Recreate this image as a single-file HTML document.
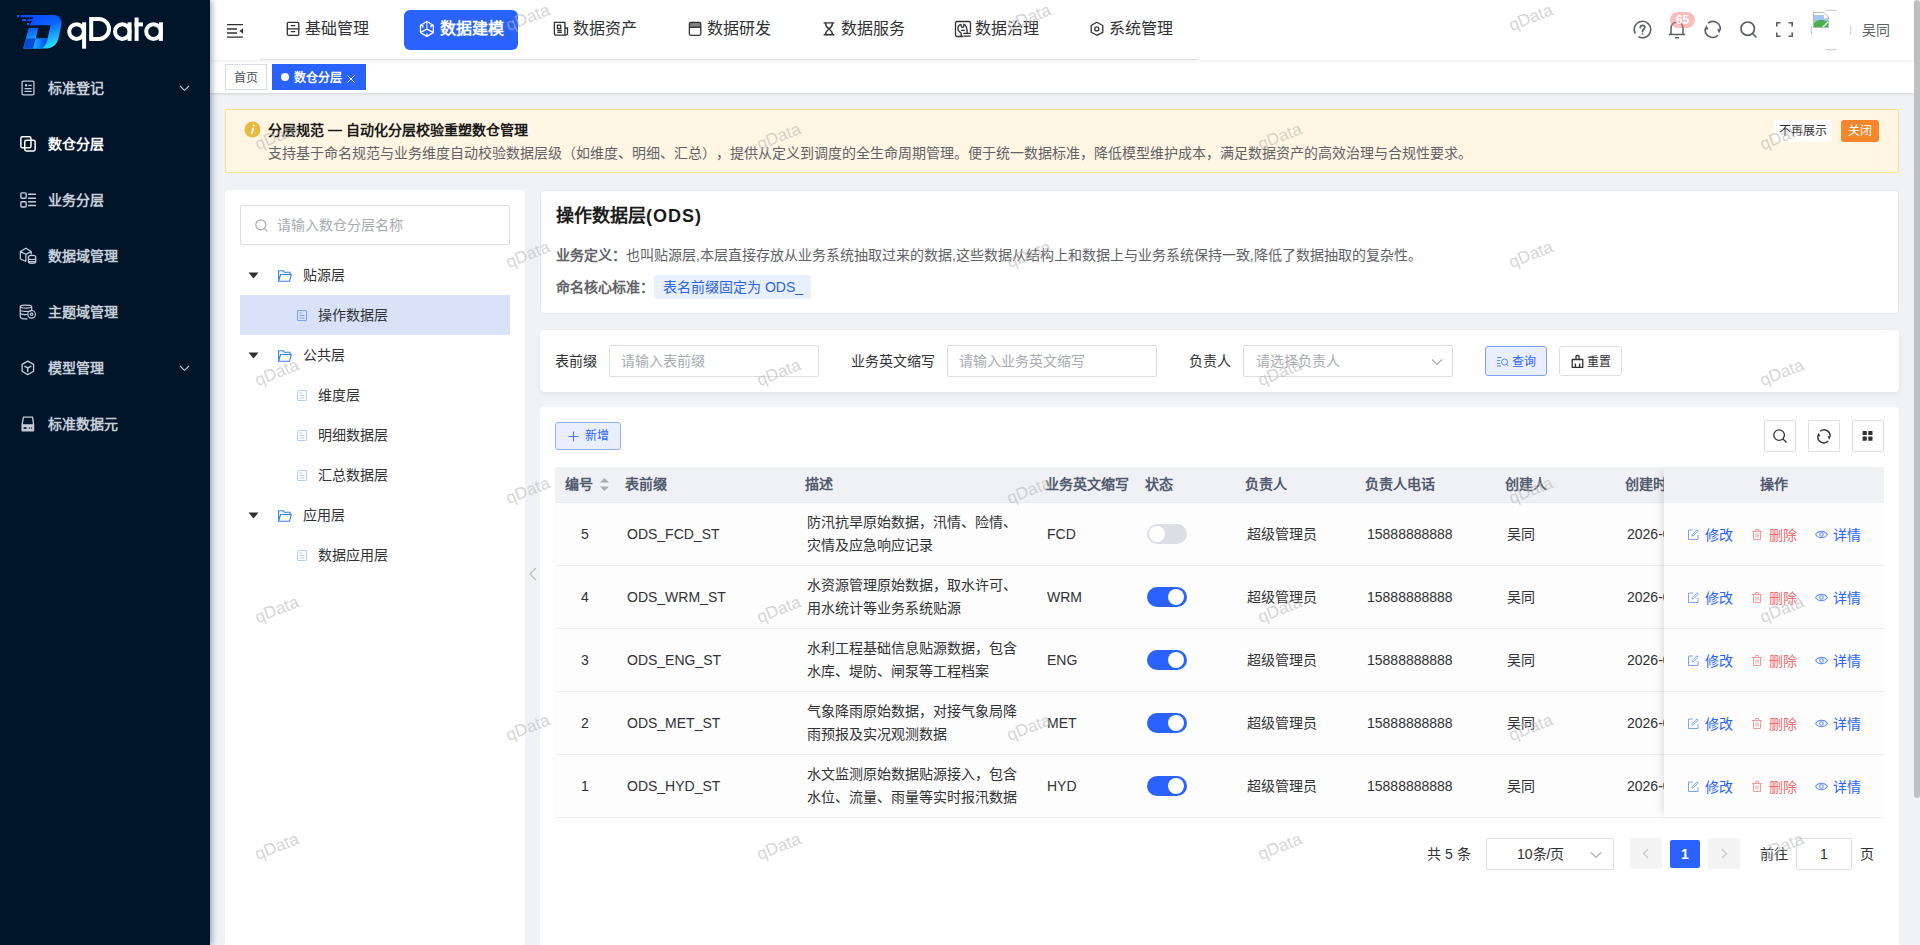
<!DOCTYPE html>
<html lang="zh-CN"><head><meta charset="utf-8">
<style>
*{box-sizing:border-box;margin:0;padding:0}
html,body{text-spacing-trim:space-all;width:1920px;height:945px;overflow:hidden;font-family:"Liberation Sans",sans-serif;color:#303133;background:#f0f2f5}
.abs{position:absolute}
#side{position:absolute;left:0;top:0;width:210px;height:945px;background:#001529;z-index:5;box-shadow:2px 0 6px rgba(0,21,41,.35)}
#nav{position:absolute;left:210px;top:0;width:1704px;height:60px;background:#fff;z-index:2;box-shadow:0 1px 4px rgba(0,21,41,.08)}
#tags{position:absolute;left:210px;top:60px;width:1704px;height:33px;background:#fff;box-shadow:0 1px 3px rgba(0,21,41,.12),0 0 3px rgba(0,0,0,.04)}
#sb{position:absolute;left:1914px;top:0;width:6px;height:945px;background:#f0f2f5}
.card{position:absolute;background:#fff;border-radius:4px}
.menu{position:absolute;left:0;width:210px;height:56px;color:#c6ceda;font-size:14px;font-weight:bold}
.menu .t{position:absolute;left:48px;top:1px;line-height:56px}
.menu svg{position:absolute;left:20px;top:20px}
.navi{position:absolute;top:10px;height:40px;font-size:16px;color:#303133;line-height:38px}
.wm{position:absolute;z-index:10;width:100px;height:30px;line-height:30px;text-align:center;font-size:17px;color:rgba(185,185,185,.6);transform:rotate(-22deg);pointer-events:none;white-space:nowrap}
</style></head><body>
<div id="side">
<svg class="abs" style="left:0;top:0" width="210" height="60" viewBox="0 0 210 60">
<defs>
<linearGradient id="lg1" x1="0" y1="0" x2="0.35" y2="1"><stop offset="0" stop-color="#0a45ff"/><stop offset="0.45" stop-color="#0a62ff"/><stop offset="1" stop-color="#22d2ff"/></linearGradient>
<linearGradient id="lg2" x1="0" y1="0" x2="1" y2="0"><stop offset="0" stop-color="#16b4ff"/><stop offset="1" stop-color="#0a3dff"/></linearGradient>
</defs>
<path d="M34,15 L53.5,15 C59.5,15 62.3,19.5 61.2,25.5 L58.6,38 C57,45 52,48.6 45,48.6 L23.2,48.6 L28.8,28.1 L38.2,28.1 L35.9,38.5 L47.6,38.5 L50.6,25.3 L30.3,25.3 Z" fill="url(#lg1)"/>
<path d="M23.2,48.6 L26,38.5 L35.9,38.5 L33.2,48.6 Z" fill="#0a4bd6"/>
<path d="M33.2,48.6 L35.9,38.5 L47.6,38.5 C46.5,44 44,48.6 40,48.6 Z" fill="url(#lg2)"/>
<rect x="20.7" y="15" width="14" height="2.3" fill="#0a4dff"/>
<rect x="17.1" y="15" width="2" height="2.3" fill="#1a55ff"/>
<rect x="21.9" y="19.2" width="4.1" height="2" fill="#1a55ff"/>
<rect x="27.3" y="19.2" width="7.6" height="2" fill="#0a4dff"/>
<rect x="27" y="23" width="2.3" height="2" fill="#1a55ff"/>
<rect x="30.3" y="23" width="5" height="2.3" fill="#0a4dff"/>
<g fill="none" stroke="#fff" stroke-width="4">
<circle cx="76.5" cy="31.6" r="7.3"/><line x1="84.1" y1="22.3" x2="84.1" y2="48.7"/>
<path d="M91.2,18.9 H99 A10,10 0 0 1 99,38.9 H91.2 Z"/>
<circle cx="122.3" cy="31.6" r="7.3"/><line x1="129.6" y1="22.3" x2="129.6" y2="40.9"/>
<line x1="136.6" y1="17.5" x2="136.6" y2="40.9"/><line x1="134.5" y1="24.4" x2="143" y2="24.4"/>
<circle cx="153.5" cy="31.6" r="7.3"/><line x1="160.9" y1="22.3" x2="160.9" y2="40.9"/>
</g>
</svg>
<div class="menu" style="top:59px"><svg width="14" height="16" viewBox="0 0 14 16" style="left:21px;top:21px"><g fill="none" stroke="#c6ceda" stroke-width="1.3"><rect x="1.1" y="1.1" width="11.8" height="13.7" rx="1"/><path d="M7.8,5.3 H10.2 M4,8.6 H10.2 M4,11.4 H10.2" stroke-linecap="round"/></g><rect x="4" y="4.1" width="2.2" height="2.3" fill="#c6ceda"/></svg><span class="t">标准登记</span>
<svg width="11" height="7" viewBox="0 0 11 7" style="left:179px;top:26px"><path d="M1,1 L5.5,5.3 L10,1" fill="none" stroke="#c6ceda" stroke-width="1.1"/></svg></div>
<div class="menu" style="top:115px;color:#fff"><svg width="18" height="18" viewBox="0 0 18 18" style="left:19px;top:20px"><g fill="none" stroke="#fff" stroke-width="1.5"><rect x="1.85" y="1.85" width="10.1" height="10.9" rx="1.6"/><rect x="5.75" y="5.15" width="10.4" height="10.8" rx="1.6"/></g></svg><span class="t">数仓分层</span></div>
<div class="menu" style="top:171px"><svg width="18" height="18" viewBox="0 0 18 18" style="left:19px;top:20px"><g fill="none" stroke="#c6ceda" stroke-width="1.4" stroke-linecap="round"><rect x="1.85" y="1.85" width="5.3" height="5.4" rx="1"/><rect x="1.85" y="10.7" width="5.3" height="5.3" rx="1"/><path d="M9.5,3.3 H16.5 M9.5,7.3 H16.5 M9.5,10.7 H16.5 M9.5,14.5 H16.5"/></g></svg><span class="t">业务分层</span></div>
<div class="menu" style="top:227px"><svg width="18" height="18" viewBox="0 0 18 18" style="left:19px;top:20px"><g fill="none" stroke="#c6ceda" stroke-width="1.2" stroke-linejoin="round"><path d="M1.3,4.6 L6.9,1.2 L12.2,4.6 L6.9,7.2 Z M1.3,4.6 V12 L6.9,14.5 M6.9,7.2 V14.5 M12.2,4.6 V7.6"/><path d="M9.4,10 C9.4,7.7 16.8,7.7 16.8,10 V14.8 C16.8,17 9.4,17 9.4,14.8 Z M9.4,11.6 C9.4,12.8 16.8,12.8 16.8,11.6 M9.4,13.9 C9.4,15 16.8,15 16.8,13.9"/></g></svg><span class="t">数据域管理</span></div>
<div class="menu" style="top:283px"><svg width="18" height="18" viewBox="0 0 18 18" style="left:19px;top:21px"><g fill="none" stroke="#c6ceda" stroke-width="1.2"><path d="M1.2,2.6 C1.2,0.5 12.7,0.5 12.7,2.6 C12.7,4.6 1.2,4.6 1.2,2.6 Z M1.2,2.6 V12.8 C1.2,14.6 5,15 8.5,14.8 M1.2,6 C1.2,7.6 10,7.8 12.5,6.8 M1.2,9 C1.2,10.6 6,10.8 8.6,10.5 M12.7,2.6 V6.2"/><circle cx="12.6" cy="10.3" r="3.8"/><circle cx="12.6" cy="10.3" r="1.2"/></g></svg><span class="t">主题域管理</span></div>
<div class="menu" style="top:339px"><svg width="14" height="16" viewBox="0 0 14 16" style="left:21px;top:21px"><g fill="none" stroke="#c6ceda" stroke-width="1.3" stroke-linejoin="round"><path d="M6.7,1.1 L12.6,4.4 V11.3 L6.7,14.6 L1.1,11.3 V4.4 Z"/><path d="M3.9,6.3 L6.7,7.9 L9.9,6.3 M6.7,7.9 V11.5" stroke-width="1.5" stroke-linecap="round"/></g></svg><span class="t">模型管理</span>
<svg width="11" height="7" viewBox="0 0 11 7" style="left:179px;top:26px"><path d="M1,1 L5.5,5.3 L10,1" fill="none" stroke="#c6ceda" stroke-width="1.1"/></svg></div>
<div class="menu" style="top:395px"><svg width="14" height="16" viewBox="0 0 14 16" style="left:21px;top:21px"><path d="M1.1,9 H12.9 V14.8 H1.1 Z" fill="#c6ceda"/><g fill="none" stroke="#c6ceda" stroke-width="1.3" stroke-linejoin="round"><path d="M2.4,1.1 H11.6 L12.6,8.8 V14.8 H1.1 V8.8 Z M1.1,8.8 H12.6"/></g><rect x="2.6" y="11.2" width="3" height="1.7" fill="#001529"/><rect x="7.9" y="11.2" width="0.9" height="1.7" fill="#001529"/><rect x="9.9" y="11.2" width="1.3" height="1.7" fill="#3a4656"/></svg><span class="t">标准数据元</span></div>
</div>
<div id="nav">
<div class="abs" style="left:50px;top:59px;width:938px;height:1px;background:#dcdfe6"></div>
<svg class="abs" style="left:17px;top:24px" width="16" height="14" viewBox="0 0 16 14"><g stroke="#303133" stroke-width="1.3"><path d="M0,0.7 H16 M0,5 H10 M0,9 H10 M0,13.2 H16"/></g><path d="M16,4.2 L12.5,7 L16,9.8 Z" fill="#303133"/></svg>
<!-- items -->
<div class="navi" style="left:61px;width:114px">
<svg class="abs" style="left:15px;top:11px" width="15" height="16" viewBox="0 0 15 16"><g fill="none" stroke="#303133" stroke-width="1.3" stroke-linecap="round"><rect x="1.3" y="1.4" width="11.5" height="12.9" rx="1.2"/><path d="M1.3,7.8 H12.8 M5.3,4.6 H8.8 M5.3,10.6 H8.8"/></g></svg>
<span class="abs" style="left:34px;top:0">基础管理</span></div>
<div class="navi" style="left:194px;width:114px;background:#2962ff;border-radius:6px;color:#fff;font-weight:bold">
<svg class="abs" style="left:15px;top:9px" width="17" height="19" viewBox="0 0 17 19"><g fill="none" stroke="#fff" stroke-width="1.3" stroke-linejoin="round"><path d="M7.9,2.5 L14.3,6.3 V13.6 L7.9,17.4 L1.5,13.6 V6.3 Z"/><path d="M1.5,13.4 L7.9,10.2 L14.3,13.4 M7.9,17.4 V14.4 M1.8,6.6 H3.8 V8.4 M14,6.6 H12 V8.4"/><path d="M7.9,2.5 V10.2" stroke-opacity="0.75"/></g></svg>
<span class="abs" style="left:36px;top:0">数据建模</span></div>
<div class="navi" style="left:328px;width:114px">
<svg class="abs" style="left:15px;top:11px" width="16" height="16" viewBox="0 0 16 16"><g fill="none" stroke="#303133" stroke-width="1.3"><path d="M11.9,14.2 H2.9 A1.5,1.5 0 0 1 1.4,12.7 V1.4 H11.9 Z M11.9,7 H14.5 V12.5 A1.7,1.7 0 0 1 12.8,14.2 H11.9"/><rect x="4.4" y="4.2" width="3.3" height="3.3"/><path d="M4.3,9.5 H8.8 M4.3,11.3 H8.8"/></g></svg>
<span class="abs" style="left:35px;top:0">数据资产</span></div>
<div class="navi" style="left:462px;width:114px">
<svg class="abs" style="left:16px;top:11px" width="14" height="16" viewBox="0 0 14 16"><rect x="1.4" y="1.4" width="11.4" height="4.9" fill="#808080"/><g fill="none" stroke="#303133" stroke-width="1.3"><rect x="1.4" y="1.4" width="11.4" height="12.9" rx="1.5"/><path d="M1.4,6.3 H12.8"/></g></svg>
<span class="abs" style="left:35px;top:0">数据研发</span></div>
<div class="navi" style="left:596px;width:114px">
<svg class="abs" style="left:16px;top:11px" width="15" height="16" viewBox="0 0 15 16"><g fill="none" stroke="#303133" stroke-width="1.4"><path d="M1.6,1.9 H12.3 M1.6,13.8 H12.3 M3.5,1.9 C3.5,5.5 5,6.5 7,7.9 C9,9.3 10.5,10.3 10.5,13.8 M10.5,1.9 C10.5,5.5 9,6.5 7,7.9 C5,9.3 3.5,10.3 3.5,13.8"/></g></svg>
<span class="abs" style="left:35px;top:0">数据服务</span></div>
<div class="navi" style="left:730px;width:114px">
<svg class="abs" style="left:14px;top:10px" width="18" height="18" viewBox="0 0 18 18"><g fill="none" stroke="#303133" stroke-width="1.3"><path d="M9,16.5 H3 A1.5,1.5 0 0 1 1.5,15 V3 A1.5,1.5 0 0 1 3,1.5 H15 A1.5,1.5 0 0 1 16.5,3 V12.3 M9.3,13.4 H16.7 M9.3,16.2 H16.7 M7.2,10.4 H10.7"/><path d="M7,4.3 C4.5,5 3.7,7.5 4,9.5 C4.3,11.5 6.8,12.5 7.2,13.5 V16.5 M7.2,4.3 V6.5 C7.2,7.6 9.8,7.6 9.8,6.5 V4.3 C12.3,5 13.2,8 13.2,13.2"/></g></svg>
<span class="abs" style="left:35px;top:0">数据治理</span></div>
<div class="navi" style="left:864px;width:114px">
<svg class="abs" style="left:16px;top:11px" width="14" height="16" viewBox="0 0 14 16"><g fill="none" stroke="#303133" stroke-width="1.3" stroke-linejoin="round"><path d="M6.8,1.3 L12.8,4.5 V11.3 L6.8,14.3 L1.2,11.3 V4.5 Z"/><circle cx="6.8" cy="7.9" r="2"/></g></svg>
<span class="abs" style="left:35px;top:0">系统管理</span></div>
<!-- right tools -->
<svg class="abs" style="left:1423px;top:20px" width="19" height="19" viewBox="0 0 19 19"><g fill="none" stroke="#5a5e66" stroke-width="1.6"><path d="M5.4,16.6 A8.2,8.2 0 1 0 2.4,13.6"/><path d="M7.3,7.5 C7.3,4.6 11.8,4.6 11.8,7.3 C11.8,9 9.8,9.4 9.5,11.5" stroke-width="1.8" stroke-linecap="round"/></g><rect x="8.7" y="13.3" width="1.7" height="1.3" fill="#5a5e66"/></svg>
<svg class="abs" style="left:1458px;top:20px" width="18" height="19" viewBox="0 0 18 19"><g fill="none" stroke="#5a5e66" stroke-width="1.5"><path d="M3,14.2 V8.5 C3,4.8 5.5,2.2 9,2.2 C12.5,2.2 15,4.8 15,8.5 V14.2 M0.8,14.6 H17.2 M7,17.8 H11"/></g></svg>
<div class="abs" style="left:1460px;top:12px;width:25px;height:16px;border-radius:8px;background:rgba(245,108,108,.45);color:#fff;font-size:12px;font-weight:bold;line-height:16px;text-align:center">65</div>
<svg class="abs" style="left:1493px;top:19px" width="20" height="20" viewBox="0 0 20 20"><g fill="none" stroke="#5a5e66" stroke-width="1.6"><path d="M5.1,4.2 A7.4,7.4 0 0 1 17.2,10.8 M14.9,16.2 A7.4,7.4 0 0 1 2.4,9.6"/></g><path d="M14.1,10.2 L18,10.2 L16.1,14.6 Z M1.5,10.4 L5.5,10.4 L3.3,6 Z" fill="#5a5e66"/></svg>
<svg class="abs" style="left:1530px;top:21px" width="18" height="18" viewBox="0 0 18 18"><g fill="none" stroke="#5a5e66" stroke-width="1.7"><circle cx="7.7" cy="7.7" r="6.7"/><path d="M12.5,12.5 L16.5,16.5"/></g></svg>
<svg class="abs" style="left:1566px;top:22px" width="17" height="15" viewBox="0 0 17 15"><g fill="none" stroke="#5a5e66" stroke-width="1.6"><path d="M0.8,4.5 V0.8 H4.5 M12.5,0.8 H16.2 V4.5 M16.2,10.5 V14.2 H12.5 M4.5,14.2 H0.8 V10.5"/></g></svg>
<svg class="abs" style="left:1600px;top:9px" width="42" height="42" viewBox="0 0 42 42"><g fill="none" stroke="#c8c8c8" stroke-width="1"><path d="M15.5,1.8 A19.7,19.7 0 0 1 26.5,1.8 M15.5,40.2 A19.7,19.7 0 0 0 26.5,40.2 M1.5,17 A19.7,19.7 0 0 0 1.5,25 M40.5,17 A19.7,19.7 0 0 1 40.5,25"/></g></svg>
<svg class="abs" style="left:1603px;top:12px" width="16" height="16" viewBox="0 0 16 16"><path d="M0.5,0.5 H11 L15.5,5 V15.5 H0.5 Z" fill="#fff" stroke="#9aa" stroke-width="0.8"/><path d="M1,3 H11 V7 L15,5.5 V10 H1 Z" fill="#a8c8f0"/><path d="M1,15 V11 C5,7 10,7 15,10 V15 Z" fill="#4caf50"/><path d="M10,15 L15,10" stroke="#fff" stroke-width="1.2"/></svg>
<span class="abs" style="left:1652px;top:20px;font-size:14px;color:#606266;line-height:20px">吴同</span>
</div>
<div id="tags">
<div class="abs" style="left:15px;top:4px;width:42px;height:26px;border:1px solid #d8dce5;background:#fff;font-size:12px;line-height:26px;text-align:center;color:#495060">首页</div>
<div class="abs" style="left:62px;top:4px;width:94px;height:26px;background:#2962ff;font-size:12px;line-height:26px;color:#fff">
<span class="abs" style="left:9px;top:9px;width:8px;height:8px;border-radius:50%;background:#fff"></span>
<span class="abs" style="left:22px;top:1px;font-weight:bold">数仓分层</span>
<svg class="abs" style="left:74px;top:10px" width="10" height="10" viewBox="0 0 10 10"><path d="M1.5,1.5 L8.5,8.5 M8.5,1.5 L1.5,8.5" stroke="#fff" stroke-width="1"/></svg>
</div>
</div>
<!-- alert -->
<div class="abs" style="left:225px;top:109px;width:1674px;height:64px;background:#fef6e3;border:1px solid #fde08c;border-radius:2px">
<svg class="abs" style="left:18.4px;top:11.4px" width="17" height="17" viewBox="0 0 17 17"><circle cx="8.5" cy="8.5" r="8" fill="#ebb940"/><circle cx="9.6" cy="4.5" r="1" fill="#fff"/><path d="M9.3,7.3 L8,12.4" stroke="#fff" stroke-width="1.7" stroke-linecap="round"/></svg>
<div class="abs" style="left:42px;top:10px;font-size:14px;line-height:20px;font-weight:bold;color:#1a1a1a">分层规范 — 自动化分层校验重塑数仓管理</div>
<div class="abs" style="left:42px;top:33px;font-size:14px;line-height:20px;color:#606266;white-space:nowrap">支持基于命名规范与业务维度自动校验数据层级（如维度、明细、汇总），提供从定义到调度的全生命周期管理。便于统一数据标准，降低模型维护成本，满足数据资产的高效治理与合规性要求。</div>
<div class="abs" style="left:1548px;top:10px;width:58px;height:22px;background:#fff;border-radius:3px;font-size:12px;line-height:22px;text-align:center;color:#303133">不再展示</div>
<div class="abs" style="left:1615px;top:10px;width:38px;height:22px;background:#f5862b;border-radius:3px;font-size:12px;line-height:22px;text-align:center;color:#fff">关闭</div>
</div>
<!-- left tree panel -->
<div class="card" style="left:225px;top:190px;width:300px;height:780px">
<div class="abs" style="left:15px;top:15px;width:270px;height:40px;border:1px solid #dcdfe6;border-radius:2px">
<svg class="abs" style="left:14px;top:13px" width="13" height="13" viewBox="0 0 13 13"><g fill="none" stroke="#a8abb2" stroke-width="1.2"><circle cx="5.8" cy="5.8" r="5"/><path d="M9.5,9.5 L12.3,12.3"/></g></svg>
<span class="abs" style="left:36px;top:9px;font-size:14px;line-height:20px;color:#a8abb2">请输入数仓分层名称</span>
</div>
<div class="abs" style="left:15px;top:105px;width:270px;height:40px;background:#d9e2f8"></div>
</div>
<div class="abs" id="tree" style="left:225px;top:190px">
</div>
<svg class="abs" style="left:528px;top:567px" width="9" height="14" viewBox="0 0 9 14"><path d="M8,1 L2,7 L8,13" fill="none" stroke="#b5b9c1" stroke-width="1.1"/></svg>
<!-- info card -->
<div class="card" style="left:540px;top:190px;width:1359px;height:124px;border:1px solid #e4e7ed">
<div class="abs" style="left:15px;top:12px;font-size:18px;line-height:26px;font-weight:bold;color:#1a1a1a">操作数据层<span style="letter-spacing:1px">(ODS)</span></div>
<div class="abs" style="left:15px;top:53px;font-size:14px;line-height:22px;color:#606266;white-space:nowrap"><span style="font-weight:bold;color:#606266">业务定义：</span>也叫贴源层,本层直接存放从业务系统抽取过来的数据,这些数据从结构上和数据上与业务系统保持一致,降低了数据抽取的复杂性。</div>
<div class="abs" style="left:15px;top:85px;font-size:14px;line-height:22px;color:#606266;font-weight:bold">命名核心标准：</div>
<div class="abs" style="left:113px;top:84px;width:157px;height:24px;background:#e8f0ff;border-radius:3px;font-size:14px;line-height:24px;color:#2b63e8;padding-left:9px;white-space:nowrap">表名前缀固定为 ODS_</div>
</div>
<!-- search card -->
<div class="card" style="left:540px;top:330px;width:1359px;height:62px;box-shadow:0 2px 5px rgba(0,0,0,.06)">
<span class="abs" style="left:15px;top:20px;font-size:14px;line-height:22px;color:#303133;font-weight:500">表前缀</span>
<div class="abs" style="left:69px;top:15px;width:210px;height:32px;border:1px solid #dcdfe6;border-radius:2px"><span class="abs" style="left:11px;top:5px;font-size:14px;line-height:20px;color:#a8abb2">请输入表前缀</span></div>
<span class="abs" style="left:311px;top:20px;font-size:14px;line-height:22px;color:#303133;font-weight:500">业务英文缩写</span>
<div class="abs" style="left:407px;top:15px;width:210px;height:32px;border:1px solid #dcdfe6;border-radius:2px"><span class="abs" style="left:11px;top:5px;font-size:14px;line-height:20px;color:#a8abb2">请输入业务英文缩写</span></div>
<span class="abs" style="left:649px;top:20px;font-size:14px;line-height:22px;color:#303133;font-weight:500">负责人</span>
<div class="abs" style="left:703px;top:15px;width:210px;height:32px;border:1px solid #dcdfe6;border-radius:2px"><span class="abs" style="left:12px;top:5px;font-size:14px;line-height:20px;color:#a8abb2">请选择负责人</span>
<svg class="abs" style="left:187px;top:12px" width="12" height="8" viewBox="0 0 12 8"><path d="M1,1.5 L6,6.5 L11,1.5" fill="none" stroke="#a8abb2" stroke-width="1.1"/></svg></div>
<div class="abs" style="left:945px;top:16px;width:62px;height:30px;border:1px solid #7ea2fb;background:#e9effe;border-radius:3px">
<svg class="abs" style="left:11px;top:9px" width="12" height="11" viewBox="0 0 12 11"><g fill="none" stroke="#5b86f7" stroke-width="1"><path d="M0,1.5 H4.5 M0,4.5 H3 M0,7.5 H3 M0,10 H4"/><circle cx="7.5" cy="6" r="3"/><path d="M9.6,8.2 L11.5,10.2"/></g></svg>
<span class="abs" style="left:26px;top:7px;font-size:12px;line-height:16px;color:#2962ff;font-weight:500">查询</span></div>
<div class="abs" style="left:1019px;top:16px;width:63px;height:30px;border:1px solid #dcdfe6;background:#fff;border-radius:3px">
<svg class="abs" style="left:11px;top:7.5px" width="13" height="13" viewBox="0 0 13 13"><g fill="none" stroke="#303133" stroke-width="1.3" stroke-linejoin="round"><path d="M5,0.7 H8 V4.2 M5,0.7 V4.2 M1.2,12.3 V4.5 H11.8 V12.3 Z M4.4,8.5 V12 M8.6,8.5 V12"/></g></svg>
<span class="abs" style="left:27px;top:7px;font-size:12px;line-height:16px;color:#303133;font-weight:500">重置</span></div>
</div>
<!-- table card -->
<div class="card" style="left:540px;top:407px;width:1359px;height:560px" id="tcard">
</div>
<svg class="abs" style="left:248px;top:272px" width="11" height="7" viewBox="0 0 11 7"><path d="M0.5,0.5 H10.5 L5.5,6.5 Z" fill="#303133"/></svg>
<svg class="abs" style="left:278px;top:270px" width="14" height="12" viewBox="0 0 14 12"><path d="M0.6,11.3 V0.7 H5 L6.3,2.2 H12 V4.5 M0.6,11.3 L2.6,4.5 H13.4 L11.4,11.3 Z" fill="none" stroke="#3d7cf5" stroke-width="1.1" stroke-linejoin="round"/></svg>
<span class="abs" style="left:303px;top:265px;font-size:14px;line-height:20px;color:#303133;font-weight:500">贴源层</span>
<svg class="abs" style="left:297px;top:310px" width="10" height="11" viewBox="0 0 10 11"><g fill="none" stroke="#7ea2f0" stroke-width="1"><rect x="0.5" y="0.5" width="9" height="10" rx="0.5"/><path d="M2.5,3 H5 M2.5,5.5 H7.5 M2.5,8 H7.5"/></g></svg>
<span class="abs" style="left:318px;top:305px;font-size:14px;line-height:20px;color:#303133;font-weight:500">操作数据层</span>
<svg class="abs" style="left:248px;top:352px" width="11" height="7" viewBox="0 0 11 7"><path d="M0.5,0.5 H10.5 L5.5,6.5 Z" fill="#303133"/></svg>
<svg class="abs" style="left:278px;top:350px" width="14" height="12" viewBox="0 0 14 12"><path d="M0.6,11.3 V0.7 H5 L6.3,2.2 H12 V4.5 M0.6,11.3 L2.6,4.5 H13.4 L11.4,11.3 Z" fill="none" stroke="#3d7cf5" stroke-width="1.1" stroke-linejoin="round"/></svg>
<span class="abs" style="left:303px;top:345px;font-size:14px;line-height:20px;color:#303133;font-weight:500">公共层</span>
<svg class="abs" style="left:297px;top:390px" width="10" height="11" viewBox="0 0 10 11"><g fill="none" stroke="#b9cdf5" stroke-width="1"><rect x="0.5" y="0.5" width="9" height="10" rx="0.5"/><path d="M2.5,3 H5 M2.5,5.5 H7.5 M2.5,8 H7.5"/></g></svg>
<span class="abs" style="left:318px;top:385px;font-size:14px;line-height:20px;color:#303133;font-weight:500">维度层</span>
<svg class="abs" style="left:297px;top:430px" width="10" height="11" viewBox="0 0 10 11"><g fill="none" stroke="#b9cdf5" stroke-width="1"><rect x="0.5" y="0.5" width="9" height="10" rx="0.5"/><path d="M2.5,3 H5 M2.5,5.5 H7.5 M2.5,8 H7.5"/></g></svg>
<span class="abs" style="left:318px;top:425px;font-size:14px;line-height:20px;color:#303133;font-weight:500">明细数据层</span>
<svg class="abs" style="left:297px;top:470px" width="10" height="11" viewBox="0 0 10 11"><g fill="none" stroke="#b9cdf5" stroke-width="1"><rect x="0.5" y="0.5" width="9" height="10" rx="0.5"/><path d="M2.5,3 H5 M2.5,5.5 H7.5 M2.5,8 H7.5"/></g></svg>
<span class="abs" style="left:318px;top:465px;font-size:14px;line-height:20px;color:#303133;font-weight:500">汇总数据层</span>
<svg class="abs" style="left:248px;top:512px" width="11" height="7" viewBox="0 0 11 7"><path d="M0.5,0.5 H10.5 L5.5,6.5 Z" fill="#303133"/></svg>
<svg class="abs" style="left:278px;top:510px" width="14" height="12" viewBox="0 0 14 12"><path d="M0.6,11.3 V0.7 H5 L6.3,2.2 H12 V4.5 M0.6,11.3 L2.6,4.5 H13.4 L11.4,11.3 Z" fill="none" stroke="#3d7cf5" stroke-width="1.1" stroke-linejoin="round"/></svg>
<span class="abs" style="left:303px;top:505px;font-size:14px;line-height:20px;color:#303133;font-weight:500">应用层</span>
<svg class="abs" style="left:297px;top:550px" width="10" height="11" viewBox="0 0 10 11"><g fill="none" stroke="#b9cdf5" stroke-width="1"><rect x="0.5" y="0.5" width="9" height="10" rx="0.5"/><path d="M2.5,3 H5 M2.5,5.5 H7.5 M2.5,8 H7.5"/></g></svg>
<span class="abs" style="left:318px;top:545px;font-size:14px;line-height:20px;color:#303133;font-weight:500">数据应用层</span><div class="abs" style="left:555px;top:422px;width:66px;height:28px;border:1px solid #8fb0f8;background:#e9effe;border-radius:3px"><svg class="abs" style="left:12px;top:8px" width="11" height="11" viewBox="0 0 11 11"><path d="M5.5,0.5 V10.5 M0.5,5.5 H10.5" stroke="#4a78f5" stroke-width="1.1"/></svg><span class="abs" style="left:29px;top:5px;font-size:12px;line-height:16px;color:#2962ff">新增</span></div>
<div class="abs" style="left:1764px;top:420px;width:32px;height:32px;border:1px solid #dcdfe6;border-radius:2px;background:#fff"></div>
<div class="abs" style="left:1808px;top:420px;width:32px;height:32px;border:1px solid #dcdfe6;border-radius:2px;background:#fff"></div>
<div class="abs" style="left:1852px;top:420px;width:32px;height:32px;border:1px solid #dcdfe6;border-radius:2px;background:#fff"></div>
<svg class="abs" style="left:1772px;top:428px" width="16" height="16" viewBox="0 0 16 16"><g fill="none" stroke="#303133" stroke-width="1.3"><circle cx="7.1" cy="7.1" r="5.3"/><path d="M10.9,10.9 L14.5,14.5"/></g></svg>
<svg class="abs" style="left:1816px;top:428px" width="16" height="16" viewBox="0 0 16 16"><g transform="translate(8,8) scale(0.82) translate(-9.8,-10)"><g fill="none" stroke="#303133" stroke-width="1.6"><path d="M5.1,4.2 A7.4,7.4 0 0 1 17.2,10.8 M14.9,16.2 A7.4,7.4 0 0 1 2.4,9.6"/></g><path d="M14.1,10.2 L18,10.2 L16.1,14.6 Z M1.5,10.4 L5.5,10.4 L3.3,6 Z" fill="#303133"/></g></svg>
<svg class="abs" style="left:1862px;top:430px" width="12" height="12" viewBox="0 0 12 12"><g fill="#303133"><rect x="0.6" y="0.9" width="4.2" height="4.2" rx="0.6"/><rect x="6.3" y="0.9" width="4.2" height="4.2" rx="0.6"/><rect x="0.6" y="6.6" width="4.2" height="4.2" rx="0.6"/><rect x="6.3" y="6.6" width="4.2" height="4.2" rx="0.6"/></g></svg>
<div class="abs" style="left:555px;top:467px;width:1329px;height:36px;background:#f0f1f5;border-bottom:1px solid #e6e9f2"></div>
<div class="abs" style="left:555px;top:467px;width:1109px;height:36px;overflow:hidden">
<span class="abs" style="left:10px;top:6px;font-size:14px;line-height:22px;color:#515a6e;font-weight:bold;white-space:nowrap">编号</span>
<span class="abs" style="left:70px;top:6px;font-size:14px;line-height:22px;color:#515a6e;font-weight:bold;white-space:nowrap">表前缀</span>
<span class="abs" style="left:250px;top:6px;font-size:14px;line-height:22px;color:#515a6e;font-weight:bold;white-space:nowrap">描述</span>
<span class="abs" style="left:490px;top:6px;font-size:14px;line-height:22px;color:#515a6e;font-weight:bold;white-space:nowrap">业务英文缩写</span>
<span class="abs" style="left:590px;top:6px;font-size:14px;line-height:22px;color:#515a6e;font-weight:bold;white-space:nowrap">状态</span>
<span class="abs" style="left:690px;top:6px;font-size:14px;line-height:22px;color:#515a6e;font-weight:bold;white-space:nowrap">负责人</span>
<span class="abs" style="left:810px;top:6px;font-size:14px;line-height:22px;color:#515a6e;font-weight:bold;white-space:nowrap">负责人电话</span>
<span class="abs" style="left:950px;top:6px;font-size:14px;line-height:22px;color:#515a6e;font-weight:bold;white-space:nowrap">创建人</span>
<span class="abs" style="left:1070px;top:6px;font-size:14px;line-height:22px;color:#515a6e;font-weight:bold;white-space:nowrap">创建时间</span>
</div>
<svg class="abs" style="left:599px;top:477px" width="11" height="15" viewBox="0 0 11 15"><path d="M5.5,1 L10,5.5 H1 Z M5.5,14 L10,9.5 H1 Z" fill="#a8abb2"/></svg>
<div class="abs" style="left:555px;top:503px;width:1329px;height:62px;background:#fdfdfe"></div>
<div class="abs" style="left:555px;top:565px;width:1329px;height:1px;background:#ebeef5"></div>
<span class="abs" style="left:555px;width:60px;text-align:center;top:523px;font-size:14px;line-height:22px;color:#303133">5</span>
<span class="abs" style="left:627px;top:523px;font-size:14px;line-height:22px;color:#303133">ODS_FCD_ST</span>
<span class="abs" style="left:807px;top:511px;font-size:14px;line-height:23px;color:#303133;white-space:nowrap">防汛抗旱原始数据，汛情、险情、<br>灾情及应急响应记录</span>
<span class="abs" style="left:1047px;top:523px;font-size:14px;line-height:22px;color:#303133">FCD</span>
<div class="abs" style="left:1147px;top:524px;width:40px;height:20px;border-radius:10px;background:#dcdfe6"><div class="abs" style="left:2px;top:2px;width:16px;height:16px;border-radius:50%;background:#fff"></div></div>
<span class="abs" style="left:1247px;top:523px;font-size:14px;line-height:22px;color:#303133">超级管理员</span>
<span class="abs" style="left:1367px;top:523px;font-size:14px;line-height:22px;color:#303133">15888888888</span>
<span class="abs" style="left:1507px;top:523px;font-size:14px;line-height:22px;color:#303133">吴同</span>
<div class="abs" style="left:1627px;top:523px;width:37px;overflow:hidden;font-size:14px;line-height:22px;color:#303133;white-space:nowrap">2026-03-01</div>
<div class="abs" style="left:555px;top:566px;width:1329px;height:62px;background:#fdfdfe"></div>
<div class="abs" style="left:555px;top:628px;width:1329px;height:1px;background:#ebeef5"></div>
<span class="abs" style="left:555px;width:60px;text-align:center;top:586px;font-size:14px;line-height:22px;color:#303133">4</span>
<span class="abs" style="left:627px;top:586px;font-size:14px;line-height:22px;color:#303133">ODS_WRM_ST</span>
<span class="abs" style="left:807px;top:574px;font-size:14px;line-height:23px;color:#303133;white-space:nowrap">水资源管理原始数据，取水许可、<br>用水统计等业务系统贴源</span>
<span class="abs" style="left:1047px;top:586px;font-size:14px;line-height:22px;color:#303133">WRM</span>
<div class="abs" style="left:1147px;top:587px;width:40px;height:20px;border-radius:10px;background:#2962ff"><div class="abs" style="left:21px;top:2px;width:16px;height:16px;border-radius:50%;background:#fff"></div></div>
<span class="abs" style="left:1247px;top:586px;font-size:14px;line-height:22px;color:#303133">超级管理员</span>
<span class="abs" style="left:1367px;top:586px;font-size:14px;line-height:22px;color:#303133">15888888888</span>
<span class="abs" style="left:1507px;top:586px;font-size:14px;line-height:22px;color:#303133">吴同</span>
<div class="abs" style="left:1627px;top:586px;width:37px;overflow:hidden;font-size:14px;line-height:22px;color:#303133;white-space:nowrap">2026-03-01</div>
<div class="abs" style="left:555px;top:629px;width:1329px;height:62px;background:#fdfdfe"></div>
<div class="abs" style="left:555px;top:691px;width:1329px;height:1px;background:#ebeef5"></div>
<span class="abs" style="left:555px;width:60px;text-align:center;top:649px;font-size:14px;line-height:22px;color:#303133">3</span>
<span class="abs" style="left:627px;top:649px;font-size:14px;line-height:22px;color:#303133">ODS_ENG_ST</span>
<span class="abs" style="left:807px;top:637px;font-size:14px;line-height:23px;color:#303133;white-space:nowrap">水利工程基础信息贴源数据，包含<br>水库、堤防、闸泵等工程档案</span>
<span class="abs" style="left:1047px;top:649px;font-size:14px;line-height:22px;color:#303133">ENG</span>
<div class="abs" style="left:1147px;top:650px;width:40px;height:20px;border-radius:10px;background:#2962ff"><div class="abs" style="left:21px;top:2px;width:16px;height:16px;border-radius:50%;background:#fff"></div></div>
<span class="abs" style="left:1247px;top:649px;font-size:14px;line-height:22px;color:#303133">超级管理员</span>
<span class="abs" style="left:1367px;top:649px;font-size:14px;line-height:22px;color:#303133">15888888888</span>
<span class="abs" style="left:1507px;top:649px;font-size:14px;line-height:22px;color:#303133">吴同</span>
<div class="abs" style="left:1627px;top:649px;width:37px;overflow:hidden;font-size:14px;line-height:22px;color:#303133;white-space:nowrap">2026-03-01</div>
<div class="abs" style="left:555px;top:692px;width:1329px;height:62px;background:#fdfdfe"></div>
<div class="abs" style="left:555px;top:754px;width:1329px;height:1px;background:#ebeef5"></div>
<span class="abs" style="left:555px;width:60px;text-align:center;top:712px;font-size:14px;line-height:22px;color:#303133">2</span>
<span class="abs" style="left:627px;top:712px;font-size:14px;line-height:22px;color:#303133">ODS_MET_ST</span>
<span class="abs" style="left:807px;top:700px;font-size:14px;line-height:23px;color:#303133;white-space:nowrap">气象降雨原始数据，对接气象局降<br>雨预报及实况观测数据</span>
<span class="abs" style="left:1047px;top:712px;font-size:14px;line-height:22px;color:#303133">MET</span>
<div class="abs" style="left:1147px;top:713px;width:40px;height:20px;border-radius:10px;background:#2962ff"><div class="abs" style="left:21px;top:2px;width:16px;height:16px;border-radius:50%;background:#fff"></div></div>
<span class="abs" style="left:1247px;top:712px;font-size:14px;line-height:22px;color:#303133">超级管理员</span>
<span class="abs" style="left:1367px;top:712px;font-size:14px;line-height:22px;color:#303133">15888888888</span>
<span class="abs" style="left:1507px;top:712px;font-size:14px;line-height:22px;color:#303133">吴同</span>
<div class="abs" style="left:1627px;top:712px;width:37px;overflow:hidden;font-size:14px;line-height:22px;color:#303133;white-space:nowrap">2026-03-01</div>
<div class="abs" style="left:555px;top:755px;width:1329px;height:62px;background:#fdfdfe"></div>
<div class="abs" style="left:555px;top:817px;width:1329px;height:1px;background:#ebeef5"></div>
<span class="abs" style="left:555px;width:60px;text-align:center;top:775px;font-size:14px;line-height:22px;color:#303133">1</span>
<span class="abs" style="left:627px;top:775px;font-size:14px;line-height:22px;color:#303133">ODS_HYD_ST</span>
<span class="abs" style="left:807px;top:763px;font-size:14px;line-height:23px;color:#303133;white-space:nowrap">水文监测原始数据贴源接入，包含<br>水位、流量、雨量等实时报汛数据</span>
<span class="abs" style="left:1047px;top:775px;font-size:14px;line-height:22px;color:#303133">HYD</span>
<div class="abs" style="left:1147px;top:776px;width:40px;height:20px;border-radius:10px;background:#2962ff"><div class="abs" style="left:21px;top:2px;width:16px;height:16px;border-radius:50%;background:#fff"></div></div>
<span class="abs" style="left:1247px;top:775px;font-size:14px;line-height:22px;color:#303133">超级管理员</span>
<span class="abs" style="left:1367px;top:775px;font-size:14px;line-height:22px;color:#303133">15888888888</span>
<span class="abs" style="left:1507px;top:775px;font-size:14px;line-height:22px;color:#303133">吴同</span>
<div class="abs" style="left:1627px;top:775px;width:37px;overflow:hidden;font-size:14px;line-height:22px;color:#303133;white-space:nowrap">2026-03-01</div>
<div class="abs" style="left:1664px;top:467px;width:220px;height:351px;box-shadow:-6px 0 8px -4px rgba(0,0,0,.12)"></div>
<div class="abs" style="left:1664px;top:467px;width:220px;height:36px;background:#f0f1f5"><span class="abs" style="left:96px;top:6px;font-size:14px;line-height:22px;color:#515a6e;font-weight:bold">操作</span></div>
<div class="abs" style="left:1664px;top:503px;width:220px;height:62px;background:#fdfdfe"></div>
<div class="abs" style="left:1664px;top:565px;width:220px;height:1px;background:#ebeef5"></div>
<svg class="abs" style="left:1688px;top:529px" width="11" height="11" viewBox="0 0 11 11"><g fill="none" stroke="#7ea2f7" stroke-width="1"><path d="M5,1 H0.5 V10.5 H10 V6"/><path d="M9,0.8 L10.2,2 L5.5,6.7 L4,7 L4.3,5.5 Z"/></g></svg>
<span class="abs" style="left:1705px;top:524px;font-size:14px;line-height:22px;color:#2962ff">修改</span>
<svg class="abs" style="left:1752px;top:529px" width="10" height="11" viewBox="0 0 10 11"><g fill="none" stroke="#f59a9a" stroke-width="1"><path d="M0,2.5 H10 M3.5,2.5 V0.5 H6.5 V2.5 M1.5,2.5 V10.5 H8.5 V2.5 M4,4.5 V8.5 M6,4.5 V8.5"/></g></svg>
<span class="abs" style="left:1769px;top:524px;font-size:14px;line-height:22px;color:#f56c6c">删除</span>
<svg class="abs" style="left:1815px;top:530px" width="13" height="9" viewBox="0 0 13 9"><g fill="none" stroke="#6b93f5" stroke-width="1.1"><path d="M0.6,4.5 C3,0.3 10,0.3 12.4,4.5 C10,8.7 3,8.7 0.6,4.5 Z"/><circle cx="6.5" cy="4.5" r="1.8"/></g></svg>
<span class="abs" style="left:1833px;top:524px;font-size:14px;line-height:22px;color:#2962ff">详情</span>
<div class="abs" style="left:1664px;top:566px;width:220px;height:62px;background:#fdfdfe"></div>
<div class="abs" style="left:1664px;top:628px;width:220px;height:1px;background:#ebeef5"></div>
<svg class="abs" style="left:1688px;top:592px" width="11" height="11" viewBox="0 0 11 11"><g fill="none" stroke="#7ea2f7" stroke-width="1"><path d="M5,1 H0.5 V10.5 H10 V6"/><path d="M9,0.8 L10.2,2 L5.5,6.7 L4,7 L4.3,5.5 Z"/></g></svg>
<span class="abs" style="left:1705px;top:587px;font-size:14px;line-height:22px;color:#2962ff">修改</span>
<svg class="abs" style="left:1752px;top:592px" width="10" height="11" viewBox="0 0 10 11"><g fill="none" stroke="#f59a9a" stroke-width="1"><path d="M0,2.5 H10 M3.5,2.5 V0.5 H6.5 V2.5 M1.5,2.5 V10.5 H8.5 V2.5 M4,4.5 V8.5 M6,4.5 V8.5"/></g></svg>
<span class="abs" style="left:1769px;top:587px;font-size:14px;line-height:22px;color:#f56c6c">删除</span>
<svg class="abs" style="left:1815px;top:593px" width="13" height="9" viewBox="0 0 13 9"><g fill="none" stroke="#6b93f5" stroke-width="1.1"><path d="M0.6,4.5 C3,0.3 10,0.3 12.4,4.5 C10,8.7 3,8.7 0.6,4.5 Z"/><circle cx="6.5" cy="4.5" r="1.8"/></g></svg>
<span class="abs" style="left:1833px;top:587px;font-size:14px;line-height:22px;color:#2962ff">详情</span>
<div class="abs" style="left:1664px;top:629px;width:220px;height:62px;background:#fdfdfe"></div>
<div class="abs" style="left:1664px;top:691px;width:220px;height:1px;background:#ebeef5"></div>
<svg class="abs" style="left:1688px;top:655px" width="11" height="11" viewBox="0 0 11 11"><g fill="none" stroke="#7ea2f7" stroke-width="1"><path d="M5,1 H0.5 V10.5 H10 V6"/><path d="M9,0.8 L10.2,2 L5.5,6.7 L4,7 L4.3,5.5 Z"/></g></svg>
<span class="abs" style="left:1705px;top:650px;font-size:14px;line-height:22px;color:#2962ff">修改</span>
<svg class="abs" style="left:1752px;top:655px" width="10" height="11" viewBox="0 0 10 11"><g fill="none" stroke="#f59a9a" stroke-width="1"><path d="M0,2.5 H10 M3.5,2.5 V0.5 H6.5 V2.5 M1.5,2.5 V10.5 H8.5 V2.5 M4,4.5 V8.5 M6,4.5 V8.5"/></g></svg>
<span class="abs" style="left:1769px;top:650px;font-size:14px;line-height:22px;color:#f56c6c">删除</span>
<svg class="abs" style="left:1815px;top:656px" width="13" height="9" viewBox="0 0 13 9"><g fill="none" stroke="#6b93f5" stroke-width="1.1"><path d="M0.6,4.5 C3,0.3 10,0.3 12.4,4.5 C10,8.7 3,8.7 0.6,4.5 Z"/><circle cx="6.5" cy="4.5" r="1.8"/></g></svg>
<span class="abs" style="left:1833px;top:650px;font-size:14px;line-height:22px;color:#2962ff">详情</span>
<div class="abs" style="left:1664px;top:692px;width:220px;height:62px;background:#fdfdfe"></div>
<div class="abs" style="left:1664px;top:754px;width:220px;height:1px;background:#ebeef5"></div>
<svg class="abs" style="left:1688px;top:718px" width="11" height="11" viewBox="0 0 11 11"><g fill="none" stroke="#7ea2f7" stroke-width="1"><path d="M5,1 H0.5 V10.5 H10 V6"/><path d="M9,0.8 L10.2,2 L5.5,6.7 L4,7 L4.3,5.5 Z"/></g></svg>
<span class="abs" style="left:1705px;top:713px;font-size:14px;line-height:22px;color:#2962ff">修改</span>
<svg class="abs" style="left:1752px;top:718px" width="10" height="11" viewBox="0 0 10 11"><g fill="none" stroke="#f59a9a" stroke-width="1"><path d="M0,2.5 H10 M3.5,2.5 V0.5 H6.5 V2.5 M1.5,2.5 V10.5 H8.5 V2.5 M4,4.5 V8.5 M6,4.5 V8.5"/></g></svg>
<span class="abs" style="left:1769px;top:713px;font-size:14px;line-height:22px;color:#f56c6c">删除</span>
<svg class="abs" style="left:1815px;top:719px" width="13" height="9" viewBox="0 0 13 9"><g fill="none" stroke="#6b93f5" stroke-width="1.1"><path d="M0.6,4.5 C3,0.3 10,0.3 12.4,4.5 C10,8.7 3,8.7 0.6,4.5 Z"/><circle cx="6.5" cy="4.5" r="1.8"/></g></svg>
<span class="abs" style="left:1833px;top:713px;font-size:14px;line-height:22px;color:#2962ff">详情</span>
<div class="abs" style="left:1664px;top:755px;width:220px;height:62px;background:#fdfdfe"></div>
<div class="abs" style="left:1664px;top:817px;width:220px;height:1px;background:#ebeef5"></div>
<svg class="abs" style="left:1688px;top:781px" width="11" height="11" viewBox="0 0 11 11"><g fill="none" stroke="#7ea2f7" stroke-width="1"><path d="M5,1 H0.5 V10.5 H10 V6"/><path d="M9,0.8 L10.2,2 L5.5,6.7 L4,7 L4.3,5.5 Z"/></g></svg>
<span class="abs" style="left:1705px;top:776px;font-size:14px;line-height:22px;color:#2962ff">修改</span>
<svg class="abs" style="left:1752px;top:781px" width="10" height="11" viewBox="0 0 10 11"><g fill="none" stroke="#f59a9a" stroke-width="1"><path d="M0,2.5 H10 M3.5,2.5 V0.5 H6.5 V2.5 M1.5,2.5 V10.5 H8.5 V2.5 M4,4.5 V8.5 M6,4.5 V8.5"/></g></svg>
<span class="abs" style="left:1769px;top:776px;font-size:14px;line-height:22px;color:#f56c6c">删除</span>
<svg class="abs" style="left:1815px;top:782px" width="13" height="9" viewBox="0 0 13 9"><g fill="none" stroke="#6b93f5" stroke-width="1.1"><path d="M0.6,4.5 C3,0.3 10,0.3 12.4,4.5 C10,8.7 3,8.7 0.6,4.5 Z"/><circle cx="6.5" cy="4.5" r="1.8"/></g></svg>
<span class="abs" style="left:1833px;top:776px;font-size:14px;line-height:22px;color:#2962ff">详情</span>
<span class="abs" style="left:1427px;top:843px;font-size:14px;line-height:22px;color:#303133">共 5 条</span>
<div class="abs" style="left:1486px;top:838px;width:128px;height:32px;border:1px solid #dcdfe6;border-radius:2px"><span class="abs" style="left:30px;top:5px;font-size:14px;line-height:20px;color:#303133">10条/页</span><svg class="abs" style="left:103px;top:12px" width="12" height="8" viewBox="0 0 12 8"><path d="M1,1.5 L6,6.5 L11,1.5" fill="none" stroke="#a8abb2" stroke-width="1.1"/></svg></div>
<div class="abs" style="left:1630px;top:838px;width:32px;height:31px;background:#f4f4f5;border-radius:2px"><svg class="abs" style="left:12px;top:10px" width="7" height="11" viewBox="0 0 7 11"><path d="M6,1 L1.5,5.5 L6,10" fill="none" stroke="#c0c4cc" stroke-width="1.1"/></svg></div>
<div class="abs" style="left:1670px;top:840px;width:30px;height:28px;background:#2962ff;border-radius:2px;color:#fff;font-weight:bold;font-size:14px;line-height:28px;text-align:center">1</div>
<div class="abs" style="left:1708px;top:838px;width:32px;height:31px;background:#f4f4f5;border-radius:2px"><svg class="abs" style="left:13px;top:10px" width="7" height="11" viewBox="0 0 7 11"><path d="M1,1 L5.5,5.5 L1,10" fill="none" stroke="#c0c4cc" stroke-width="1.1"/></svg></div>
<span class="abs" style="left:1760px;top:843px;font-size:14px;line-height:22px;color:#303133">前往</span>
<div class="abs" style="left:1796px;top:838px;width:56px;height:32px;border:1px solid #dcdfe6;border-radius:2px;text-align:center;font-size:14px;line-height:30px;color:#303133">1</div>
<span class="abs" style="left:1860px;top:843px;font-size:14px;line-height:22px;color:#303133">页</span><div class="wm" style="left:227.0px;top:121.5px">qData</div>
<div class="wm" style="left:227.0px;top:358.0px">qData</div>
<div class="wm" style="left:227.0px;top:595.0px">qData</div>
<div class="wm" style="left:227.0px;top:831.5px">qData</div>
<div class="wm" style="left:477.8px;top:3.0px">qData</div>
<div class="wm" style="left:477.8px;top:240.0px">qData</div>
<div class="wm" style="left:477.8px;top:476.0px">qData</div>
<div class="wm" style="left:477.8px;top:713.0px">qData</div>
<div class="wm" style="left:728.6px;top:121.5px">qData</div>
<div class="wm" style="left:728.6px;top:358.0px">qData</div>
<div class="wm" style="left:728.6px;top:595.0px">qData</div>
<div class="wm" style="left:728.6px;top:831.5px">qData</div>
<div class="wm" style="left:979.4px;top:3.0px">qData</div>
<div class="wm" style="left:979.4px;top:240.0px">qData</div>
<div class="wm" style="left:979.4px;top:476.0px">qData</div>
<div class="wm" style="left:979.4px;top:713.0px">qData</div>
<div class="wm" style="left:1230.2px;top:121.5px">qData</div>
<div class="wm" style="left:1230.2px;top:358.0px">qData</div>
<div class="wm" style="left:1230.2px;top:595.0px">qData</div>
<div class="wm" style="left:1230.2px;top:831.5px">qData</div>
<div class="wm" style="left:1481.0px;top:3.0px">qData</div>
<div class="wm" style="left:1481.0px;top:240.0px">qData</div>
<div class="wm" style="left:1481.0px;top:476.0px">qData</div>
<div class="wm" style="left:1481.0px;top:713.0px">qData</div>
<div class="wm" style="left:1731.8px;top:121.5px">qData</div>
<div class="wm" style="left:1731.8px;top:358.0px">qData</div>
<div class="wm" style="left:1731.8px;top:595.0px">qData</div>
<div class="wm" style="left:1731.8px;top:831.5px">qData</div>
<div id="sb"><div style="position:absolute;left:0;top:0;width:6px;height:93px;background:#fff"></div><div style="position:absolute;left:0;top:0;width:6px;height:798px;background:#c1c1c1;border-radius:3px"></div></div>
</body></html>
